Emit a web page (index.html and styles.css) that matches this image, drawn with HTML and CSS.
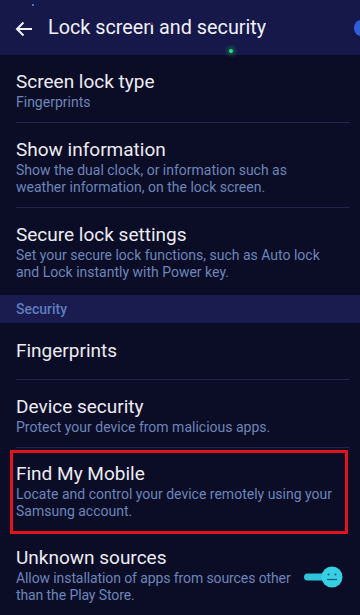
FILE: index.html
```html
<!DOCTYPE html>
<html lang="en">

<head>
    <meta charset="UTF-8">
    <meta name="viewport" content="width=device-width, initial-scale=1.0">
    <title>Lock screen and security</title>
    <link rel="stylesheet" href="styles.css">
</head>

<body>
    <div class="screen">
        <div class="header">
            <svg class="back" width="18" height="16" viewBox="0 0 18 16">
                <path d="M17 8H2M8.5 1.5L2 8l6.5 6.5" fill="none" stroke="#f2f2f6" stroke-width="2" />
            </svg>
            <h1>Lock screen and security</h1>
            <!-- theme decorations -->
            <span class="dot dot-blue"></span>
            <span class="dot dot-red"></span>
            <span class="dot dot-green"></span>
            <span class="moon"></span>
        </div>

        <div class="item">
            <div class="title">Screen lock type</div>
            <div class="sub">Fingerprints</div>
        </div>
        <div class="item">
            <div class="title">Show information</div>
            <div class="sub">Show the dual clock, or information such as weather information, on the lock screen.</div>
        </div>
        <div class="item last">
            <div class="title">Secure lock settings</div>
            <div class="sub">Set your secure lock functions, such as Auto lock and Lock instantly with Power key.</div>
        </div>

        <div class="section">Security</div>

        <div class="item single">
            <div class="title">Fingerprints</div>
        </div>
        <div class="item">
            <div class="title">Device security</div>
            <div class="sub">Protect your device from malicious apps.</div>
        </div>
        <div class="item marked">
            <div class="title">Find My Mobile</div>
            <div class="sub">Locate and control your device remotely using your Samsung account.</div>
        </div>
        <div class="item switch-item">
            <div class="text">
                <div class="title">Unknown sources</div>
                <div class="sub">Allow installation of apps from sources other than the Play Store.</div>
            </div>
            <svg class="toggle" width="40" height="24" viewBox="0 0 40 24">
                <rect x="0" y="8.5" width="26" height="7" rx="3.5" fill="#2ec4da" />
                <circle cx="28" cy="12" r="10.5" fill="#36cfe4" />
                <circle cx="24.5" cy="9.5" r="1" fill="#0d5a70" />
                <circle cx="31.5" cy="9.5" r="1" fill="#0d5a70" />
                <path d="M23 14.5h10" stroke="#0d5a70" stroke-width="1.2" />
            </svg>
        </div>
    </div>
</body>

</html>
```

FILE: styles.css
```css
* {
    margin: 0;
    padding: 0;
    box-sizing: border-box;
}

body {
    background: #0b0c26;
    font-family: Roboto, "Noto Sans", sans-serif;
}

.screen {
    width: 360px;
    height: 615px;
    overflow: hidden;
    background: #0b0c26;
}

.header {
    position: relative;
    height: 55px;
    background: #16184a;
    display: flex;
    align-items: center;
    padding-left: 15px;
}

.back {
    margin-right: 15px;
    margin-top: 2px;
}

.header h1 {
    color: #f0f0f5;
    font-size: 19.8px;
    font-weight: 400;
}

.dot {
    position: absolute;
    border-radius: 50%;
}

.dot-blue {
    left: 32px;
    top: 4px;
    width: 2px;
    height: 2px;
    background: #6c8fd8;
}

.dot-red {
    left: 150px;
    top: 22px;
    width: 3px;
    height: 3px;
    background: #6a2046;
}

.dot-green {
    left: 229px;
    top: 49px;
    width: 4px;
    height: 4px;
    background: #29e07a;
    box-shadow: 0 0 4px 2px rgba(30, 160, 90, 0.5);
}

.moon {
    position: absolute;
    right: -8px;
    top: 20px;
    width: 14px;
    height: 16px;
    border-radius: 50%;
    background: #2d5fd8;
}

.item {
    margin: 0 10px 0 16px;
    padding: 15px 0 11px;
    border-bottom: 1px solid #22254a;
}

.item.last {
    border-bottom: none;
    padding-bottom: 14px;
}

.item.single {
    padding: 16px 0;
}

.title {
    color: #ececf2;
    font-size: 19px;
    line-height: 24px;
}

.sub {
    color: #6c86b9;
    font-size: 14px;
    line-height: 17px;
    padding-right: 10px;
}

.section {
    height: 28px;
    background: #1a1c50;
    color: #5d7cbf;
    font-size: 14px;
    font-weight: 500;
    line-height: 28px;
    padding-left: 16px;
}

.item.marked {
    margin: 2px 12px 0 10px;
    padding: 9px 0 11px 3px;
    border: 3px solid #e0141c;
}

.switch-item {
    display: flex;
    align-items: center;
    border-bottom: none;
    padding-top: 12px;
}

.switch-item .text {
    flex: 1;
}

.switch-item .sub {
    padding-right: 0;
    letter-spacing: -0.1px;
}

.toggle {
    margin-right: 6px;
    margin-top: 4px;
}
```
